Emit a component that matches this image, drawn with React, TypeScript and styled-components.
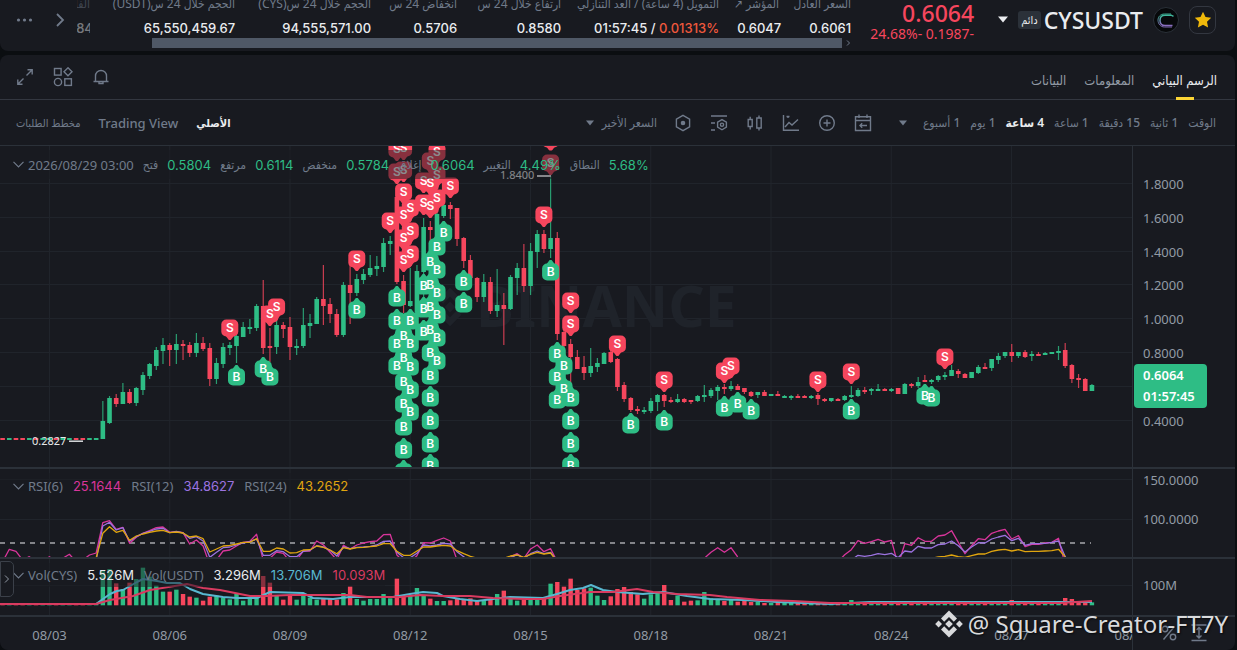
import React from "react";
import styled, { createGlobalStyle } from "styled-components";

const c = {
  page: "#0b0e11",
  panel: "#181a20",
  line: "#2b3139",
  rule: "#333740",
  grid: "#20242b",
  text: "#eaecef",
  muted: "#707a8a",
  axis: "#929aa5",
  up: "#2ebd85",
  down: "#f6465d",
  yellow: "#fcd535",
  pink: "#d8359b",
  purple: "#9c73e0",
  gold: "#e0a50f",
  teal: "#58b8d0",
  crimson: "#d93b60",
};

const latin = `"Noto Sans", "DejaVu Sans Condensed", "DejaVu Sans", sans-serif`;
const figures = `Inter, "Noto Sans", sans-serif`;

const GlobalStyle = createGlobalStyle`
  * { box-sizing: border-box; }
  body { margin: 0; background: ${c.page}; font-family: ${latin}; color: ${c.text}; }
  button, select { font: inherit; color: inherit; background: none; border: 0; padding: 0; margin: 0; cursor: pointer; }
  svg { display: block; }
`;

/* ---------- layout ---------- */

const Page = styled.div`
  min-height: 100vh;
  padding-right: 2px;
  overflow: hidden;
  display: flex;
  flex-direction: column;
  gap: 4px;
`;

const Header = styled.header`
  display: flex;
  height: 51px;
  overflow: hidden;
  background: ${c.panel};
  border-radius: 0 0 8px 8px;
  padding: 0 19px 0 15px;
`;

const PairBlock = styled.div`
  display: flex;
  height: 39px;
  align-items: center;
  gap: 10px;
`;

const StarButton = styled.button`
  width: 27px;
  height: 28px;
  display: grid;
  place-items: center;
  border: 1px solid ${c.rule};
  border-radius: 8px;
`;

const PairName = styled.h1`
  margin: 0;
  display: flex;
  align-items: center;
  gap: 3px;
  font-size: 23px;
  line-height: 30px;
  font-weight: 500;
`;

const Badge = styled.span`
  padding: 0 3px;
  height: 18px;
  line-height: 17px;
  border-radius: 3px;
  background: ${c.line};
  font-size: 11px;
  font-weight: 400;
`;

const PairToggle = styled.button`
  color: ${c.text};
`;

const PriceBlock = styled.div`
  width: 147px;
  padding-right: 24px;
  flex: none;
  color: ${c.down};
  white-space: nowrap;
`;

const BigPrice = styled.div`
  font-size: 23px;
  line-height: 26px;
  font-weight: 500;
`;

const Change = styled.div`
  font-size: 14px;
  line-height: 16px;
`;

const StatsArea = styled.div`
  flex: 1;
  min-width: 0;
  display: flex;
  flex-direction: column;
  align-items: stretch;
`;

const Stats = styled.dl`
  margin: 0;
  height: 38px;
  display: flex;
  gap: 18px;
  overflow: hidden;
`;

const Stat = styled.div<{ $w: number; $faded?: boolean }>`
  flex: 0 0 ${(p) => p.$w}px;
  min-width: 0;
  opacity: ${(p) => (p.$faded ? 0.45 : 1)};
  white-space: nowrap;
  overflow: ${(p) => (p.$faded ? "hidden" : "visible")};
`;

const StatLabel = styled.dt`
  font-size: 12px;
  line-height: 18px;
  margin-top: -5px;
  color: ${c.muted};
`;

const StatValue = styled.dd`
  margin: 7px 0 0;
  font-family: ${figures};
  font-size: 13px;
  line-height: 16px;
  font-weight: 500;
  direction: ltr;
  text-align: right;
`;

const Orange = styled.span`
  color: #f0583c;
`;

const ScrollRow = styled.div`
  display: flex;
  align-items: center;
  height: 10px;
  gap: 3px;
  padding-left: 75px;
`;

const ScrollThumb = styled.div`
  flex: 1;
  height: 10px;
  background: #4f5866;
`;

const HeaderTools = styled.div`
  width: 62px;
  height: 39px;
  flex: none;
  display: flex;
  align-items: center;
  justify-content: flex-end;
  gap: 15px;
  color: ${c.axis};
`;

const Panel = styled.main`
  background: ${c.panel};
  border-radius: 8px;
  overflow: hidden;
`;

const TabBar = styled.nav`
  display: flex;
  height: 45px;
  justify-content: space-between;
  align-items: stretch;
  border-bottom: 1px solid ${c.rule};
  padding: 0 18px 0 15px;
`;

const TabList = styled.div`
  display: flex;
  gap: 18px;
`;

const Tab = styled.button<{ $active?: boolean }>`
  position: relative;
  padding-top: 6px;
  font-size: 13px;
  color: ${(p) => (p.$active ? c.text : c.axis)};
  &::after {
    content: "";
    display: ${(p) => (p.$active ? "block" : "none")};
    position: absolute;
    bottom: -1px;
    left: calc(50% - 9px);
    width: 18px;
    height: 3px;
    background: ${c.yellow};
  }
`;

const IconRow = styled.div`
  display: flex;
  align-items: center;
  gap: 18px;
  color: ${c.muted};
`;

const IconButton = styled.button`
  color: ${c.muted};
  flex: none;
`;

const Toolbar = styled.div`
  display: flex;
  height: 46px;
  align-items: center;
  justify-content: space-between;
  border-bottom: 1px solid ${c.line};
  padding: 1px 19px 0 16px;
  font-size: 12px;
  color: ${c.muted};
`;

const ToolGroup = styled.div<{ $gap: number }>`
  display: flex;
  align-items: center;
  gap: ${(p) => p.$gap}px;
`;

const TextButton = styled.button<{ $active?: boolean; $size?: number }>`
  font-size: ${(p) => p.$size ?? 12}px;
  line-height: 20px;
  white-space: nowrap;
  font-weight: ${(p) => (p.$active ? 600 : 500)};
  color: ${(p) => (p.$active ? c.text : c.muted)};
`;

const SelectWrap = styled.label`
  display: flex;
  align-items: center;
  gap: 6px;
`;

const PriceSelect = styled.select`
  appearance: none;
  font-size: 12px;
  line-height: 20px;
`;

const Pane = styled.section`
  position: relative;
  display: flex;
  direction: ltr;
  border-bottom: 2px solid ${c.line};
`;

const Plot = styled.svg`
  flex: 1;
  min-width: 0;
  font-family: ${latin};
`;

const Scale = styled.svg`
  flex: none;
  width: 103px;
  border-left: 1px solid ${c.line};
  font-family: ${latin};
  font-size: 13px;
  fill: ${c.axis};
`;

const Legend = styled.div<{ $h: number; $gap: number }>`
  position: absolute;
  left: 0;
  top: 4px;
  height: ${(p) => p.$h}px;
  padding-left: 13px;
  display: flex;
  align-items: center;
  gap: ${(p) => p.$gap}px;
  font-size: 13px;
  white-space: nowrap;
  background: rgba(24, 26, 32, 0.5);
  color: ${c.muted};
`;

const Fold = styled.button`
  display: flex;
  align-items: center;
  gap: 4px;
`;

const Val = styled.span<{ $c: string }>`
  font-family: ${figures};
  color: ${(p) => p.$c};
`;

const Small = styled.span`
  font-size: 12px;
`;

const SideHandle = styled.button`
  position: absolute;
  left: 0;
  top: 2px;
  width: 14px;
  height: 36px;
  display: grid;
  place-items: center;
  background: ${c.panel};
  border: 1px solid #3b4049;
  border-radius: 0 5px 5px 0;
  color: ${c.axis};
`;

const TimeAxis = styled.div`
  position: relative;
  display: flex;
  direction: ltr;
`;

const ScaleTools = styled.div`
  flex: none;
  width: 103px;
  border-left: 1px solid ${c.line};
  padding: 6px 0 0 26px;
  display: flex;
  gap: 10px;
  align-items: flex-start;
`;

const Signature = styled.div`
  position: absolute;
  right: 7px;
  bottom: 9px;
  display: flex;
  align-items: center;
  gap: 5px;
  font-size: 24px;
  line-height: 34px;
  color: #d9dadc;
  white-space: nowrap;
  text-shadow: 1px 1px 2px rgba(0, 0, 0, 0.7);
  pointer-events: none;
`;

/* ---------- chart data ---------- */

const STEP = 6.683;
const px = (i: number) => 2.6 + STEP * i;

// direction, body top, body bottom, wick top, wick bottom
type Candle = [0 | 1, number, number, number, number];
const flat: Candle[] = [0, 1, 0, 0, 1, 0, 1, 1, 0, 1, 1, 0, 0, 1, 1].map(
  (d) => [d as 0 | 1, 438, 440, 438, 440],
);
const candles: Candle[] = [
  ...flat,
  [1, 421, 439, 401, 439], [1, 398, 423, 396, 424], [0, 398, 404, 394, 407], [1, 392, 404, 383, 404],
  [0, 392, 403, 389, 404], [1, 388, 403, 387, 406], [1, 375, 390, 372, 395], [1, 364, 376, 363, 379],
  [1, 350, 366, 347, 370], [1, 345, 351, 338, 364], [0, 345, 350, 343, 366], [1, 344, 350, 334, 364],
  [0, 344, 346, 340, 360], [0, 345, 353, 342, 357], [1, 343, 353, 333, 357], [0, 343, 349, 337, 351],
  [0, 348, 379, 343, 386], [1, 363, 379, 358, 384], [1, 347, 364, 343, 368], [1, 345, 348, 342, 355],
  [1, 336, 346, 335, 363], [1, 327, 337, 322, 337], [1, 327, 329, 319, 334], [1, 306, 328, 304, 331],
  [0, 306, 348, 280, 354], [0, 346, 348, 328, 362], [1, 325, 347, 320, 354], [0, 325, 329, 322, 338],
  [0, 327, 347, 317, 360], [1, 346, 347, 339, 355], [1, 325, 346, 308, 348], [1, 323, 326, 314, 338],
  [1, 299, 324, 297, 324], [0, 299, 306, 265, 325], [0, 304, 314, 298, 323], [0, 314, 335, 309, 337],
  [1, 285, 335, 282, 337], [0, 285, 293, 258, 324], [1, 279, 293, 274, 296], [1, 274, 280, 269, 284],
  [1, 268, 275, 255, 277], [1, 266, 269, 256, 276], [1, 243, 267, 238, 272], [1, 241, 244, 236, 255],
  [0, 197, 282, 190, 284], [0, 281, 305, 275, 313], [1, 301, 306, 268, 307], [1, 271, 312, 265, 330],
  [1, 227, 272, 218, 300], [0, 227, 230, 221, 242], [1, 214, 240, 210, 250], [1, 205, 216, 204, 218],
  [0, 205, 209, 202, 219], [0, 208, 239, 208, 246], [0, 238, 261, 237, 268], [0, 260, 278, 255, 280],
  [0, 278, 297, 277, 302], [1, 282, 297, 274, 302], [0, 282, 311, 277, 314], [1, 305, 311, 269, 317],
  [0, 305, 309, 293, 345], [1, 277, 309, 275, 310], [1, 268, 278, 263, 295], [0, 268, 286, 244, 292],
  [1, 251, 286, 243, 295], [1, 234, 252, 230, 268], [0, 234, 249, 230, 253], [1, 238, 249, 176, 258],
  [0, 238, 334, 232, 340], [0, 332, 346, 330, 350], [0, 344, 357, 339, 385], [0, 357, 369, 350, 369],
  [0, 367, 373, 356, 380], [1, 366, 373, 348, 377], [1, 363, 367, 358, 372], [1, 353, 364, 352, 364],
  [0, 352, 362, 350, 363], [0, 359, 387, 358, 391], [0, 385, 399, 382, 402], [0, 398, 410, 397, 412],
  [0, 409, 411, 406, 414], [1, 410, 411, 407, 414], [1, 401, 411, 398, 413], [1, 395, 402, 394, 411],
  [0, 395, 401, 394, 407], [0, 400, 402, 397, 403], [1, 399, 402, 394, 403], [0, 399, 402, 398, 403],
  [0, 400, 402, 400, 404], [1, 396, 401, 395, 402], [1, 395, 397, 385, 402], [1, 390, 396, 388, 398],
  [1, 387, 391, 385, 400], [0, 387, 389, 384, 394], [1, 386, 389, 381, 391], [0, 386, 390, 384, 390],
  [0, 388, 392, 388, 394], [0, 392, 396, 391, 397], [1, 392, 395, 392, 398], [0, 392, 396, 390, 396],
  [1, 394, 396, 394, 396], [0, 394, 396, 391, 396], [1, 396, 398, 395, 398], [1, 396, 398, 395, 400],
  [0, 396, 398, 394, 398], [0, 396, 398, 395, 398], [1, 396, 398, 395, 399], [0, 395, 399, 393, 405],
  [0, 399, 401, 398, 402], [1, 398, 401, 398, 402], [0, 399, 401, 398, 401], [1, 396, 400, 395, 401],
  [1, 395, 397, 386, 398], [1, 390, 396, 388, 397], [0, 390, 392, 387, 394], [1, 389, 391, 388, 395],
  [1, 389, 391, 384, 391], [0, 389, 391, 388, 391], [1, 389, 391, 388, 392], [0, 388, 394, 388, 394],
  [1, 384, 394, 383, 394], [0, 384, 386, 383, 388], [1, 382, 386, 377, 388], [0, 380, 382, 375, 382],
  [1, 380, 382, 379, 384], [1, 376, 380, 375, 382], [1, 375, 377, 372, 380], [1, 370, 376, 365, 376],
  [0, 371, 374, 369, 378], [0, 374, 378, 373, 378], [1, 372, 378, 372, 378], [1, 367, 373, 365, 374],
  [0, 367, 369, 363, 369], [1, 359, 368, 359, 371], [1, 356, 360, 353, 364], [1, 352, 356, 352, 358],
  [0, 352, 356, 344, 362], [1, 352, 356, 352, 358], [0, 352, 357, 350, 358], [1, 354, 356, 351, 361],
  [0, 354, 356, 352, 356], [1, 353, 355, 352, 355], [1, 352, 354, 352, 354], [1, 351, 353, 346, 360],
  [0, 350, 366, 343, 368], [0, 365, 379, 364, 383], [0, 378, 380, 374, 388], [0, 379, 391, 378, 391],
  [1, 385, 391, 384, 391],
];

// candle index, centre y
const sells: [number, number][] = [
  [59, 149], [60, 148], [59, 172], [60, 170], [65, 152], [64, 161], [65, 175], [82, 139], [82, 163],
  [60, 192], [58, 221], [61, 208], [60, 215], [61, 231], [60, 238], [61, 254], [60, 260],
  [63, 181], [64, 183], [67, 186], [65, 198], [63, 203], [64, 206],
  [81, 215], [85, 301], [85, 324], [92, 344], [53, 259], [41, 307], [40, 314], [34, 328],
  [99, 380], [109, 366], [108, 371], [122, 380], [127, 372], [141, 357],
];
const buys: [number, number][] = [
  [35, 377], [39, 369], [40, 377], [53, 310], [66, 233], [65, 247], [64, 262], [65, 270], [63, 286],
  [64, 285], [65, 293], [59, 298], [69, 282], [69, 304], [63, 309], [64, 307], [65, 315], [82, 272],
  [63, 332], [64, 330], [65, 338], [64, 353], [65, 361], [64, 376], [64, 398], [64, 421], [64, 444], [64, 466],
  [59, 321], [61, 321], [60, 336], [59, 344], [61, 344], [60, 358], [59, 366], [61, 367], [60, 382],
  [61, 390], [60, 404], [61, 412], [60, 427], [60, 450], [60, 472],
  [83, 354], [84, 366], [83, 377], [84, 389], [83, 400], [85, 398], [85, 421], [85, 444], [85, 466],
  [94, 425], [99, 422], [108, 408], [110, 404], [112, 411], [127, 411], [138, 396], [139, 398],
];

// indicator runs: first candle index, then a value per candle (thirds of a unit below 465)
type Run = [number, number[]];
const rsi6: Run[] = [
  [0, [290, 253, 259, 285, 275, 290, 290, 275, 290, 280, 268, 290, 285, 270, 264, 173, 167, 193, 187, 235, 217, 205, 197, 188, 186, 202, 200, 203, 237, 225, 243, 300, 285, 258, 255, 243, 232, 229, 208, 285, 280, 261, 265, 290, 285, 258, 258, 228, 240, 262, 285, 241, 252, 240, 234, 230, 228, 209, 208, 270, 290, 290, 272, 233, 234, 226, 219, 228, 285]],
  [76, [275, 266, 280, 252, 240, 260, 251, 290]],
  [105, [280, 262, 248, 262, 248, 276]],
  [125, [290, 269, 254, 227, 235, 230, 223, 231, 226, 300, 236, 241, 218, 229, 229, 213, 210, 197, 232, 266, 242, 221, 224, 205, 198, 193, 222, 212, 245, 238, 238, 234, 232, 220, 300]],
];
const rsi12: Run[] = [
  [14, [285, 183, 172, 195, 188, 229, 215, 205, 199, 192, 190, 203, 199, 204, 220, 215, 228, 277, 262, 248, 246, 240, 234, 230, 222, 271, 271, 257, 260, 275, 275, 259, 256, 242, 246, 256, 273, 246, 251, 247, 246, 244, 240, 229, 228, 262, 278, 278, 265, 240, 243, 240, 235, 237, 260, 275, 290]],
  [76, [278, 269, 280, 266, 258, 266, 262, 290]],
  [127, [285, 271, 274, 271, 266, 269, 265, 278, 258, 261, 244, 249, 249, 239, 237, 228, 242, 261, 246, 233, 234, 222, 216, 211, 227, 220, 241, 236, 236, 235, 232, 228, 275, 300]],
];
const rsi24: Run[] = [
  [14, [278, 205, 185, 202, 196, 226, 213, 207, 202, 198, 196, 203, 201, 204, 216, 213, 221, 261, 252, 243, 241, 237, 232, 232, 221, 259, 259, 249, 252, 264, 263, 255, 254, 243, 247, 255, 266, 248, 252, 248, 247, 245, 243, 236, 236, 259, 271, 271, 258, 246, 246, 243, 241, 243, 257, 266, 274, 280]],
  [75, [280, 273, 270, 277, 268, 262, 267, 264, 290]],
  [139, [280, 276, 274, 270, 275, 277, 272, 267, 267, 259, 255, 253, 258, 254, 260, 259, 259, 258, 257, 253, 275]],
];
const runPath = ([start, v]: Run) =>
  v.map((y, k) => `${k ? "L" : "M"}${px(start + k).toFixed(1)} ${(465 + y / 3).toFixed(1)}`).join("");

const volumes = [
  315, 312, 355, 372, 353, 342, 308, 335, 362, 380, 380, 374, 387, 395, 398, 407, 395, 392, 398, 403, 387, 407, 400,
  392, 333, 353, 390, 404, 392, 404, 393, 398, 404, 402, 402, 404, 384, 364, 402, 407, 402, 402, 387, 400, 341, 392,
  393, 369, 391, 401, 408, 408, 406, 400, 404, 400, 406, 406, 404, 387, 377, 402, 407, 404, 403, 402, 398, 356, 351,
  365, 341, 375, 370, 368, 392, 405, 394, 372, 366, 381, 388, 401, 388, 384, 360, 405, 392, 410, 407, 406, 381, 400,
  405, 408, 404, 410, 408, 411, 411,
];
const volTop = (i: number) => {
  if (i < 15) return 416;
  const late: Record<number, number> = { 127: 405, 151: 405, 159: 399, 160: 402, 161: 411, 162: 412, 163: 412 };
  return volumes[i - 15] ?? late[i] ?? 414;
};

const volFast: [number, number][] = [
  [0, 604], [96, 604], [110, 594], [117, 591], [123, 590], [137, 582], [143, 579], [157, 581], [167, 583], [180, 583],
  [190, 589], [203, 594], [223, 597], [237, 598], [257, 598], [270, 592], [303, 593], [313, 598], [333, 599],
  [350, 597], [393, 597], [410, 594], [423, 592], [437, 593], [443, 596], [460, 599], [477, 601], [493, 599],
  [510, 597], [543, 598], [557, 594], [570, 590], [583, 588], [591, 585], [603, 590], [617, 592], [643, 594],
  [663, 592], [687, 596], [710, 599], [743, 600], [777, 602], [830, 604], [870, 602], [1092, 602],
];
const volSlow: [number, number][] = [
  [0, 604], [96, 604], [110, 600], [133, 596], [150, 590], [187, 584], [203, 588], [220, 590], [250, 596], [267, 596],
  [290, 595], [317, 595], [350, 595], [367, 597], [400, 597], [420, 595], [443, 596], [470, 596], [493, 598],
  [527, 599], [543, 599], [560, 596], [590, 592], [613, 592], [637, 589], [653, 592], [677, 594], [710, 595],
  [727, 597], [760, 600], [793, 601], [830, 603], [1060, 603], [1092, 601],
];
const poly = (pts: [number, number][]) => pts.map((p) => p.join(",")).join(" ");

const days = ["08/03", "08/06", "08/09", "08/12", "08/15", "08/18", "08/21", "08/24", "08/27", "08/30"];
const dayX = (k: number) => 49.5 + 120.25 * k;
// the level behind the live price tag carries no label
const prices = ["1.8000", "1.6000", "1.4000", "1.2000", "1.0000", "0.8000", "", "0.4000"];
const priceY = (k: number) => 184 + Math.round(33.8 * k);

const VLines = ({ top, bottom }: { top: number; bottom: number }) => (
  <g stroke={c.grid}>
    {days.slice(0, 9).map((d, k) => (
      <line key={d} x1={dayX(k)} x2={dayX(k)} y1={top} y2={bottom} />
    ))}
  </g>
);

const Pins = ({ at, kind }: { at: [number, number][]; kind: "S" | "B" }) => (
  <g>
    <g fill={kind === "S" ? c.down : c.up}>
      {at.map(([i, y]) => (
        <g key={`${i}-${y}`} transform={`translate(${px(i).toFixed(1)} ${y})`}>
          <path d={kind === "S" ? "M-4 8H4L1 12H-1Z" : "M-4 -8H4L1 -12H-1Z"} />
          <rect x={-8.5} y={-8.5} width={17} height={17} rx={5} />
        </g>
      ))}
    </g>
    <g fill="#fff" fontSize={12} fontWeight={600} fontFamily={figures} textAnchor="middle">
      {at.map(([i, y]) => (
        <text key={`${i}-${y}`} x={px(i).toFixed(1)} y={y + 4}>{kind}</text>
      ))}
    </g>
  </g>
);

/* ---------- icons ---------- */

const Icon = ({ children, size = 20, sw = 1.4 }: { children: React.ReactNode; size?: number; sw?: number }) => (
  <svg width={size} height={size} viewBox="0 0 20 20" fill="none" stroke="currentColor" strokeWidth={sw} aria-hidden="true">
    {children}
  </svg>
);

const Caret = () => (
  <svg width="10" height="6" viewBox="0 0 10 6" fill="currentColor" aria-hidden="true">
    <path d="M1 0.5H9L5 5.5Z" />
  </svg>
);

const ChevronDown = () => (
  <svg width="11" height="7" viewBox="0 0 11 7" fill="none" stroke="currentColor" strokeWidth="1.2" aria-hidden="true">
    <path d="M0.5 0.8L5.5 5.8L10.5 0.8" />
  </svg>
);

const Diamond = ({ size }: { size: number }) => (
  <svg width={size} height={size} viewBox="0 0 28 28" fill="currentColor" aria-hidden="true">
    <path d="M14 0.5L22 8.5L18.8 11.7L14 6.9L9.2 11.7L6 8.5Z" />
    <path d="M14 27.5L22 19.5L18.8 16.3L14 21.1L9.2 16.3L6 19.5Z" />
    <path d="M3.6 10.6L7 14L3.6 17.4L0.2 14Z" />
    <path d="M24.4 10.6L27.8 14L24.4 17.4L21 14Z" />
    <path d="M14 10.2L17.8 14L14 17.8L10.2 14Z" />
  </svg>
);

/* ---------- sections ---------- */

const stats: { label: string; value: React.ReactNode; w: number; faded?: boolean }[] = [
  { label: "السعر العادل", value: "0.6061", w: 54 },
  { label: "المؤشر ↗", value: "0.6047", w: 42 },
  { label: "التمويل (4 ساعة) / العد التنازلي", value: <>01:57:45 / <Orange>0.01313%</Orange></>, w: 140 },
  { label: "ارتفاع خلال 24 س", value: "0.8580", w: 86 },
  { label: "انخفاض 24 س", value: "0.5706", w: 68 },
  { label: "الحجم خلال 24 س(CYS)", value: "94,555,571.00", w: 118 },
  { label: "الحجم خلال 24 س(USDT)", value: "65,550,459.67", w: 127 },
  { label: "الفائدة", value: "84", w: 14, faded: true },
];

const TopBar = () => (
  <Header>
    <PairBlock>
      <StarButton aria-label="المفضلة">
        <svg width="18" height="18" viewBox="0 0 18 18" fill="#f0b90b" aria-hidden="true">
          <path d="M9 0.8L11.5 6L17.2 6.8L13 10.8L14.1 16.6L9 13.8L3.9 16.6L5 10.8L0.8 6.8L6.5 6Z" />
        </svg>
      </StarButton>
      <svg width="26" height="26" viewBox="0 0 26 26" fill="none" aria-hidden="true">
        <defs>
          <linearGradient id="coin" x1="0" y1="0" x2="0" y2="1">
            <stop offset="0.1" stopColor="#3fb79c" />
            <stop offset="0.9" stopColor="#8a6fc0" />
          </linearGradient>
        </defs>
        <circle cx="13" cy="13" r="12.5" fill="#07090b" stroke={c.line} />
        <path d="M18 7H11.5C7.4 7 5 9.8 5 13.2S7.4 20 11.5 20H19" stroke="url(#coin)" strokeWidth="0.9" />
        <path d="M20.5 9.4L18.2 8.2H12C8.8 8.2 7 10.4 7 13.4S8.8 18.4 12 18.4H19.5" stroke="url(#coin)" strokeWidth="1.5" />
      </svg>
      <PairName>
        CYSUSDT <Badge>دائم</Badge>
      </PairName>
      <PairToggle aria-label="تغيير الزوج">
        <svg width="10" height="7" viewBox="0 0 10 7" fill="currentColor"><path d="M0 0.5H10L5 6.5Z" /></svg>
      </PairToggle>
    </PairBlock>
    <PriceBlock>
      <BigPrice>0.6064</BigPrice>
      <Change>
        <bdi dir="ltr">24.68%- 0.1987-</bdi>
      </Change>
    </PriceBlock>
    <StatsArea>
      <Stats>
        {stats.map((s) => (
          <Stat key={s.label} $w={s.w} $faded={s.faded}>
            <StatLabel>{s.label}</StatLabel>
            <StatValue>{s.value}</StatValue>
          </Stat>
        ))}
      </Stats>
      <ScrollRow>
        <svg width="6" height="8" viewBox="0 0 6 8" fill="none" stroke={c.muted}><path d="M2 1.5L4.5 4L2 6.5" /></svg>
        <ScrollThumb />
      </ScrollRow>
    </StatsArea>
    <HeaderTools>
      <IconButton aria-label="التالي">
        <Icon sw={1.8}><path d="M7 4L13 10L7 16" /></Icon>
      </IconButton>
      <IconButton aria-label="المزيد">
        <Icon><g fill="currentColor" stroke="none"><circle cx="3.5" cy="10" r="1.6" /><circle cx="9.5" cy="10" r="1.6" /><circle cx="15.5" cy="10" r="1.6" /></g></Icon>
      </IconButton>
    </HeaderTools>
  </Header>
);

const Tabs = () => (
  <TabBar>
    <TabList>
      <Tab $active>الرسم البياني</Tab>
      <Tab>المعلومات</Tab>
      <Tab>البيانات</Tab>
    </TabList>
    <IconRow>
      <IconButton aria-label="التنبيهات">
        <Icon><path d="M4.5 14.5V9A5.5 5.5 0 0 1 15.5 9V14.5M2.5 14.5H17.5M8 15V16.5H12V15" /></Icon>
      </IconButton>
      <IconButton aria-label="التخطيط">
        <Icon><rect x="1.5" y="1.5" width="6.6" height="6.6" /><rect x="11.8" y="11.8" width="6.6" height="6.6" /><circle cx="5" cy="15" r="3.6" /><path d="M15 0.8L19 4.8L15 8.8L11 4.8Z" /></Icon>
      </IconButton>
      <IconButton aria-label="توسيع">
        <Icon><path d="M12.5 2.8H17.2V7.5M17 3L11.5 8.5M2.8 12.5V17.2H7.5M3 17L8.5 11.5" /></Icon>
      </IconButton>
    </IconRow>
  </TabBar>
);

const frames = ["الوقت", "1 ثانية", "15 دقيقة", "1 ساعة", "4 ساعة", "1 يوم", "1 أسبوع"];

const ChartToolbar = () => (
  <Toolbar>
    <ToolGroup $gap={25}>
      <ToolGroup $gap={15}>
        <ToolGroup $gap={10}>
          {frames.map((f) => (
            <TextButton key={f} $active={f === "4 ساعة"}>{f}</TextButton>
          ))}
        </ToolGroup>
        <IconButton aria-label="المزيد من الفترات"><Caret /></IconButton>
      </ToolGroup>
      <ToolGroup $gap={16}>
        <IconButton aria-label="الانتقال إلى تاريخ">
          <Icon><path d="M2.5 3.8H17.5V17.5H2.5ZM2.5 7.5H17.5M6 1.5V5M14 1.5V5M14 12.5H7M9.2 10.3L7 12.5L9.2 14.7" /></Icon>
        </IconButton>
        <IconButton aria-label="إضافة">
          <Icon><circle cx="10" cy="10" r="7.3" /><path d="M10 6.5V13.5M6.5 10H13.5" /></Icon>
        </IconButton>
        <IconButton aria-label="المؤشرات">
          <Icon><path d="M2.5 2V17.2H18M4 14L8 9.5L11 12L17 6.5M5.5 3.5H8.5M7 3.5V5" /></Icon>
        </IconButton>
        <IconButton aria-label="نوع الشموع">
          <Icon><path d="M3.2 6.5H7.2V13.5H3.2ZM5.2 3.8V6.5M5.2 13.5V16.5M11.8 5H16.2V15H11.8ZM14 2.5V5M14 15V17.5" /></Icon>
        </IconButton>
        <IconButton aria-label="الإعدادات">
          <Icon><path d="M2 3H18M2 10H6M2 17H6M13 6.6L17.4 9.2V14.2L13 16.8L8.6 14.2V9.2Z" /><circle cx="13" cy="11.7" r="1.6" /></Icon>
        </IconButton>
        <IconButton aria-label="التفضيلات">
          <Icon><path d="M10 2.4L16.6 6.2V13.8L10 17.6L3.4 13.8V6.2Z" /><circle cx="10" cy="10" r="1.6" fill="currentColor" /></Icon>
        </IconButton>
        <SelectWrap>
          <PriceSelect aria-label="نوع السعر" defaultValue="last">
            <option value="last">السعر الأخير</option>
          </PriceSelect>
          <Caret />
        </SelectWrap>
      </ToolGroup>
    </ToolGroup>
    <ToolGroup $gap={18}>
      <TextButton $active $size={11}>الأصلي</TextButton>
      <TextButton $size={13}>Trading View</TextButton>
      <TextButton $size={11}>مخطط الطلبات</TextButton>
    </ToolGroup>
  </Toolbar>
);

const PricePane = () => (
  <Pane>
    <Plot viewBox="0 146 1132 321" preserveAspectRatio="xMinYMin meet">
      <VLines top={146} bottom={467} />
      <g stroke={c.grid}>
        {prices.map((_, k) => (
          <line key={k} x1={0} x2={1132} y1={priceY(k) - 0.5} y2={priceY(k) - 0.5} />
        ))}
      </g>
      <g color="#1f232a" transform="translate(430 287)">
        <Diamond size={40} />
      </g>
      <text x={476} y={327} fontSize={57} fontWeight={700} fill="#1f232a">BINANCE</text>
      {candles.map(([up, t, b, h, l], i) => (
        <g key={i} fill={up ? c.up : c.down}>
          <rect x={px(i) - 0.6} y={h} width={1.2} height={l - h} opacity={0.8} />
          <rect x={px(i) - 2.3} y={t} width={4.6} height={Math.max(2, b - t)} />
        </g>
      ))}
      <Pins at={buys} kind="B" />
      <Pins at={sells} kind="S" />
      <g fontSize={11} fill="#f4f5f6">
        <text x={500} y={179}>1.8400</text>
        <rect x={537} y={175} width={14} height={2} />
      </g>
      <g fontSize={11} fill="#e6e8ea">
        <text x={32} y={445}>0.2827</text>
        <rect x={69} y={440.5} width={14} height={1.4} />
      </g>
    </Plot>
    <Scale viewBox="1133 146 102 321">
      {prices.map((p, k) => p && <text key={p} x={1143} y={priceY(k) + 5}>{p}</text>)}
      <rect x={1134} y={364} width={73} height={44} rx={4} fill={c.up} />
      <g fill="#fff" fontWeight={600}>
        <text x={1143} y={380}>0.6064</text>
        <text x={1143} y={401}>01:57:45</text>
      </g>
    </Scale>
    <Legend $h={29} $gap={9}>
      <Fold><ChevronDown />2026/08/29 03:00</Fold>
      <Small>فتح</Small><Val $c={c.up}>0.5804</Val>
      <Small>مرتفع</Small><Val $c={c.up}>0.6114</Val>
      <Small>منخفض</Small><Val $c={c.up}>0.5784</Val>
      <Small>إغلاق</Small><Val $c={c.up}>0.6064</Val>
      <Small>التغيير</Small><Val $c={c.up}>4.49%</Val>
      <Small>النطاق</Small><Val $c={c.up}>5.68%</Val>
    </Legend>
  </Pane>
);

const RsiPane = () => (
  <Pane>
    <Plot viewBox="0 469 1132 88" preserveAspectRatio="xMinYMin meet">
      <VLines top={469} bottom={557} />
      <g stroke={c.grid}><line x1={0} x2={1132} y1={479.5} y2={479.5} /><line x1={0} x2={1132} y1={519.5} y2={519.5} /></g>
      <line x1={0} x2={1091} y1={543} y2={543} stroke="#a6a8ac" strokeWidth={1.3} strokeDasharray="5 5" />
      <g fill="none" strokeWidth={1.3} strokeLinejoin="round">
        {rsi6.map((r) => <path key={r[0]} d={runPath(r)} stroke={c.pink} />)}
        {rsi12.map((r) => <path key={r[0]} d={runPath(r)} stroke={c.purple} />)}
        {rsi24.map((r) => <path key={r[0]} d={runPath(r)} stroke={c.gold} />)}
      </g>
    </Plot>
    <Scale viewBox="1133 469 102 88">
      <text x={1143} y={485}>150.0000</text>
      <text x={1143} y={524}>100.0000</text>
    </Scale>
    <Legend $h={26} $gap={10}>
      <Fold><ChevronDown />RSI(6)</Fold><Val $c={c.pink}>25.1644</Val>
      <span>RSI(12)</span><Val $c={c.purple}>34.8627</Val>
      <span>RSI(24)</span><Val $c={c.gold}>43.2652</Val>
    </Legend>
  </Pane>
);

const VolumePane = () => (
  <Pane>
    <Plot viewBox="0 559 1132 56" preserveAspectRatio="xMinYMin meet">
      <VLines top={559} bottom={615} />
      <line x1={0} x2={1132} y1={585.5} y2={585.5} stroke={c.grid} />
      {candles.map(([up], i) => {
        const top = 465 + volTop(i) / 3;
        return <rect key={i} x={px(i) - 2.2} y={top} width={4.4} height={605.3 - top} fill={up ? c.up : c.down} />;
      })}
      <g fill="none" strokeWidth={2} strokeLinejoin="round">
        <polyline points={poly(volFast)} stroke={c.teal} />
        <polyline points={poly(volSlow)} stroke={c.crimson} />
      </g>
    </Plot>
    <Scale viewBox="1133 559 102 56"><text x={1143} y={590}>100M</text></Scale>
    <Legend $h={24} $gap={10}>
      <Fold><ChevronDown />Vol(CYS)</Fold><Val $c={c.text}>5.526M</Val>
      <span>Vol(USDT)</span><Val $c={c.text}>3.296M</Val>
      <Val $c={c.teal}>13.706M</Val><Val $c={c.crimson}>10.093M</Val>
    </Legend>
    <SideHandle aria-label="إظهار اللوحة">
      <svg width="6" height="10" viewBox="0 0 6 10" fill="none" stroke="currentColor"><path d="M1 1.5L4.5 5L1 8.5" /></svg>
    </SideHandle>
  </Pane>
);

const TimePane = () => (
  <TimeAxis>
    <Plot viewBox="0 617 1132 33" preserveAspectRatio="xMinYMin meet">
      <g fontSize={13} fill={c.axis} textAnchor="middle">
        {days.map((d, k) => <text key={d} x={dayX(k)} y={640}>{d}</text>)}
      </g>
    </Plot>
    <ScaleTools>
      <IconButton aria-label="نسبة مئوية">
        <Icon><circle cx="6" cy="6" r="2.7" /><circle cx="14" cy="14" r="2.7" /><path d="M15.5 3.5L4.5 16.5" /></Icon>
      </IconButton>
      <IconButton aria-label="ملاءمة تلقائية">
        <Icon><path d="M2.5 2H17.5M2.5 17.5H17.5M10 4.5V15M7.5 7L10 4.5L12.5 7M7.5 12.5L10 15L12.5 12.5" /></Icon>
      </IconButton>
    </ScaleTools>
    <Signature>
      <Diamond size={28} />
      <span>@ Square-Creator-FT7Y</span>
    </Signature>
  </TimeAxis>
);

export default function App() {
  return (
    <>
      <GlobalStyle />
      <Page dir="rtl">
        <TopBar />
        <Panel>
          <Tabs />
          <ChartToolbar />
          <PricePane />
          <RsiPane />
          <VolumePane />
          <TimePane />
        </Panel>
      </Page>
    </>
  );
}
